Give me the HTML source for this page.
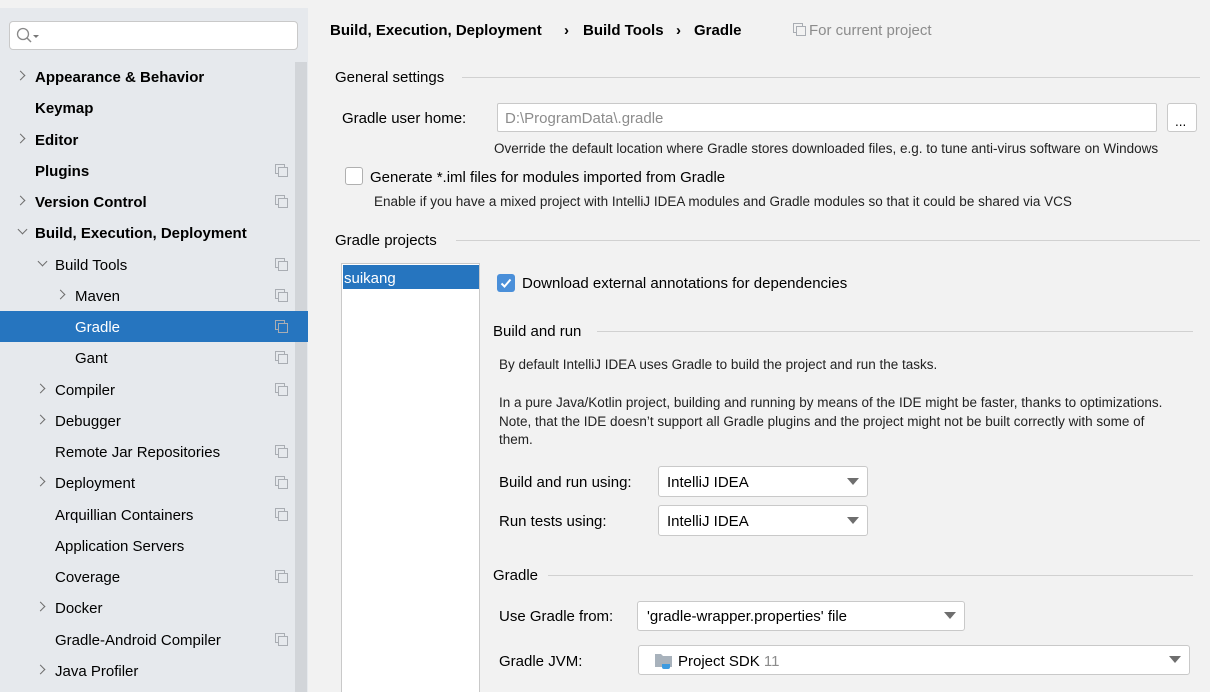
<!DOCTYPE html>
<html><head><meta charset="utf-8"><style>
*{margin:0;padding:0;box-sizing:border-box}
body{width:1210px;height:692px;overflow:hidden;background:#f2f2f2;font-family:"Liberation Sans",sans-serif;color:#000;position:relative;font-size:15px}
.a{position:absolute;white-space:nowrap;line-height:18px;margin-top:2px}
.s{font-size:13.5px;line-height:16px}
.b{font-weight:bold}
#side{position:absolute;left:0;top:8px;width:308px;height:684px;background:#e6e9ed}
.chev{position:absolute;width:7px;height:7px;border-right:1.5px solid #6e6e6e;border-bottom:1.5px solid #6e6e6e}
.r{transform:rotate(-45deg)}
.d{transform:rotate(45deg)}
.cp{position:absolute;width:12px;height:12px}
.cp:before,.cp:after{content:"";position:absolute;width:8px;height:8px;border:1.3px solid #a9adb3}
.cp:before{left:0;top:0}
.cp:after{left:3px;top:3px;background:inherit}
.line{position:absolute;height:1px;background:#d1d1d1}
.inp{position:absolute;background:#fff;border:1px solid #c9c9c9;border-radius:3px}
.arr{position:absolute;right:8px;top:50%;margin-top:-4px;width:0;height:0;border-left:6px solid transparent;border-right:6px solid transparent;border-top:7px solid #6e6e6e}
</style></head><body>
<div id="side"></div>
<div class="inp" style="left:9px;top:21px;width:289px;height:29px;border-radius:4px"></div>
<svg style="position:absolute;left:16px;top:27px" width="24" height="18"><circle cx="7" cy="7" r="5.5" fill="none" stroke="#888" stroke-width="1.3"/><line x1="11" y1="11" x2="15" y2="15" stroke="#888" stroke-width="1.5"/><path d="M17 8h6l-3 3z" fill="#777"/></svg>
<div style="position:absolute;left:295px;top:62px;width:12px;height:630px;background:#d2d5d9"></div>
<div style="position:absolute;left:0;top:311px;width:308px;height:31px;background:#2675bf"></div>

<div class="chev r" style="left:17px;top:72px"></div><div class="a b" style="left:35px;top:67px">Appearance &amp; Behavior</div>
<div class="a b" style="left:35px;top:98px">Keymap</div>
<div class="chev r" style="left:17px;top:135px"></div><div class="a b" style="left:35px;top:130px">Editor</div>
<div class="a b" style="left:35px;top:161px">Plugins</div>
<div class="chev r" style="left:17px;top:197px"></div><div class="a b" style="left:35px;top:192px">Version Control</div>
<div class="chev d" style="left:19px;top:226px"></div><div class="a b" style="left:35px;top:223px">Build, Execution, Deployment</div>
<div class="chev d" style="left:39px;top:258px"></div><div class="a" style="left:55px;top:255px">Build Tools</div>
<div class="chev r" style="left:57px;top:291px"></div><div class="a" style="left:75px;top:286px">Maven</div>
<div class="a" style="left:75px;top:317px;color:#fff">Gradle</div>
<div class="a" style="left:75px;top:348px">Gant</div>
<div class="chev r" style="left:37px;top:385px"></div><div class="a" style="left:55px;top:380px">Compiler</div>
<div class="chev r" style="left:37px;top:416px"></div><div class="a" style="left:55px;top:411px">Debugger</div>
<div class="a" style="left:55px;top:442px">Remote Jar Repositories</div>
<div class="chev r" style="left:37px;top:478px"></div><div class="a" style="left:55px;top:473px">Deployment</div>
<div class="a" style="left:55px;top:505px">Arquillian Containers</div>
<div class="a" style="left:55px;top:536px">Application Servers</div>
<div class="a" style="left:55px;top:567px">Coverage</div>
<div class="chev r" style="left:37px;top:603px"></div><div class="a" style="left:55px;top:598px">Docker</div>
<div class="a" style="left:55px;top:630px">Gradle-Android Compiler</div>
<div class="chev r" style="left:37px;top:666px"></div><div class="a" style="left:55px;top:661px">Java Profiler</div>

<div class="cp" style="left:275px;top:164px;background:#e6e9ed"></div>
<div class="cp" style="left:275px;top:195px;background:#e6e9ed"></div>
<div class="cp" style="left:275px;top:258px;background:#e6e9ed"></div>
<div class="cp" style="left:275px;top:289px;background:#e6e9ed"></div>
<div class="cp" style="left:275px;top:320px;background:#2675bf"></div>
<div class="cp" style="left:275px;top:351px;background:#e6e9ed"></div>
<div class="cp" style="left:275px;top:383px;background:#e6e9ed"></div>
<div class="cp" style="left:275px;top:445px;background:#e6e9ed"></div>
<div class="cp" style="left:275px;top:476px;background:#e6e9ed"></div>
<div class="cp" style="left:275px;top:508px;background:#e6e9ed"></div>
<div class="cp" style="left:275px;top:570px;background:#e6e9ed"></div>
<div class="cp" style="left:275px;top:633px;background:#e6e9ed"></div>

<div class="a b" style="left:330px;top:20px">Build, Execution, Deployment</div>
<div class="a b" style="left:564px;top:20px">›</div>
<div class="a b" style="left:583px;top:20px">Build Tools</div>
<div class="a b" style="left:676px;top:20px">›</div>
<div class="a b" style="left:694px;top:20px">Gradle</div>
<div class="cp" style="left:793px;top:23px;background:#f2f2f2"></div>
<div class="a" style="left:809px;top:20px;color:#8c8c8c">For current project</div>

<div class="a" style="left:335px;top:67px">General settings</div><div class="line" style="left:462px;top:77px;width:738px"></div>
<div class="a" style="left:342px;top:108px">Gradle user home:</div>
<div class="inp" style="left:497px;top:103px;width:660px;height:29px;border-radius:2px"></div>
<div class="a" style="left:505px;top:108px;color:#8c8c8c">D:\ProgramData\.gradle</div>
<div class="inp" style="left:1167px;top:103px;width:30px;height:29px"></div>
<div class="a s" style="left:1175px;top:112px">...</div>
<div class="a s" style="left:494px;top:139px;color:#222">Override the default location where Gradle stores downloaded files, e.g. to tune anti-virus software on Windows</div>
<div class="inp" style="left:345px;top:167px;width:18px;height:18px;border-color:#b0b0b0"></div>
<div class="a" style="left:370px;top:167px">Generate *.iml files for modules imported from Gradle</div>
<div class="a s" style="left:374px;top:192px;color:#222">Enable if you have a mixed project with IntelliJ IDEA modules and Gradle modules so that it could be shared via VCS</div>

<div class="a" style="left:335px;top:230px">Gradle projects</div><div class="line" style="left:456px;top:240px;width:744px"></div>
<div style="position:absolute;left:341px;top:263px;width:139px;height:429px;background:#fff;border:1px solid #c9c9c9;border-bottom:none"></div>
<div style="position:absolute;left:343px;top:265px;width:136px;height:24px;background:#2675bf"></div>
<div class="a" style="left:344px;top:268px;color:#fff">suikang</div>
<div style="position:absolute;left:497px;top:274px;width:18px;height:18px;background:#4a8fd9;border-radius:3px"></div>
<svg style="position:absolute;left:497px;top:274px" width="18" height="18"><path d="M4.5 9.5l3 3 6-7" fill="none" stroke="#fff" stroke-width="2"/></svg>
<div class="a" style="left:522px;top:273px">Download external annotations for dependencies</div>

<div class="a" style="left:493px;top:321px">Build and run</div><div class="line" style="left:597px;top:331px;width:596px"></div>
<div class="a s" style="left:499px;top:355px;color:#222">By default IntelliJ IDEA uses Gradle to build the project and run the tasks.</div>
<div class="a s" style="left:499px;top:393px;color:#222">In a pure Java/Kotlin project, building and running by means of the IDE might be faster, thanks to optimizations.</div>
<div class="a s" style="left:499px;top:412px;color:#222">Note, that the IDE doesn’t support all Gradle plugins and the project might not be built correctly with some of</div>
<div class="a s" style="left:499px;top:430px;color:#222">them.</div>

<div class="a" style="left:499px;top:472px">Build and run using:</div>
<div class="inp" style="left:658px;top:466px;width:210px;height:31px"><div class="arr"></div></div>
<div class="a" style="left:667px;top:472px">IntelliJ IDEA</div>
<div class="a" style="left:499px;top:511px">Run tests using:</div>
<div class="inp" style="left:658px;top:505px;width:210px;height:31px"><div class="arr"></div></div>
<div class="a" style="left:667px;top:511px">IntelliJ IDEA</div>

<div class="a" style="left:493px;top:565px">Gradle</div><div class="line" style="left:548px;top:575px;width:645px"></div>
<div class="a" style="left:499px;top:606px">Use Gradle from:</div>
<div class="inp" style="left:637px;top:601px;width:328px;height:30px"><div class="arr"></div></div>
<div class="a" style="left:647px;top:606px">'gradle-wrapper.properties' file</div>
<div class="a" style="left:499px;top:651px">Gradle JVM:</div>
<div class="inp" style="left:638px;top:645px;width:552px;height:30px"><div class="arr"></div></div>
<svg style="position:absolute;left:654px;top:652px" width="22" height="18"><path d="M1 2h6l2 2h9v11H1z" fill="#a8b2bc"/><path d="M8 12h8v3a2 2 0 0 1-2 2h-4a2 2 0 0 1-2-2z" fill="#3d9be0"/></svg>
<div class="a" style="left:678px;top:651px">Project SDK <span style="color:#8c8c8c">11</span></div>
</body></html>
